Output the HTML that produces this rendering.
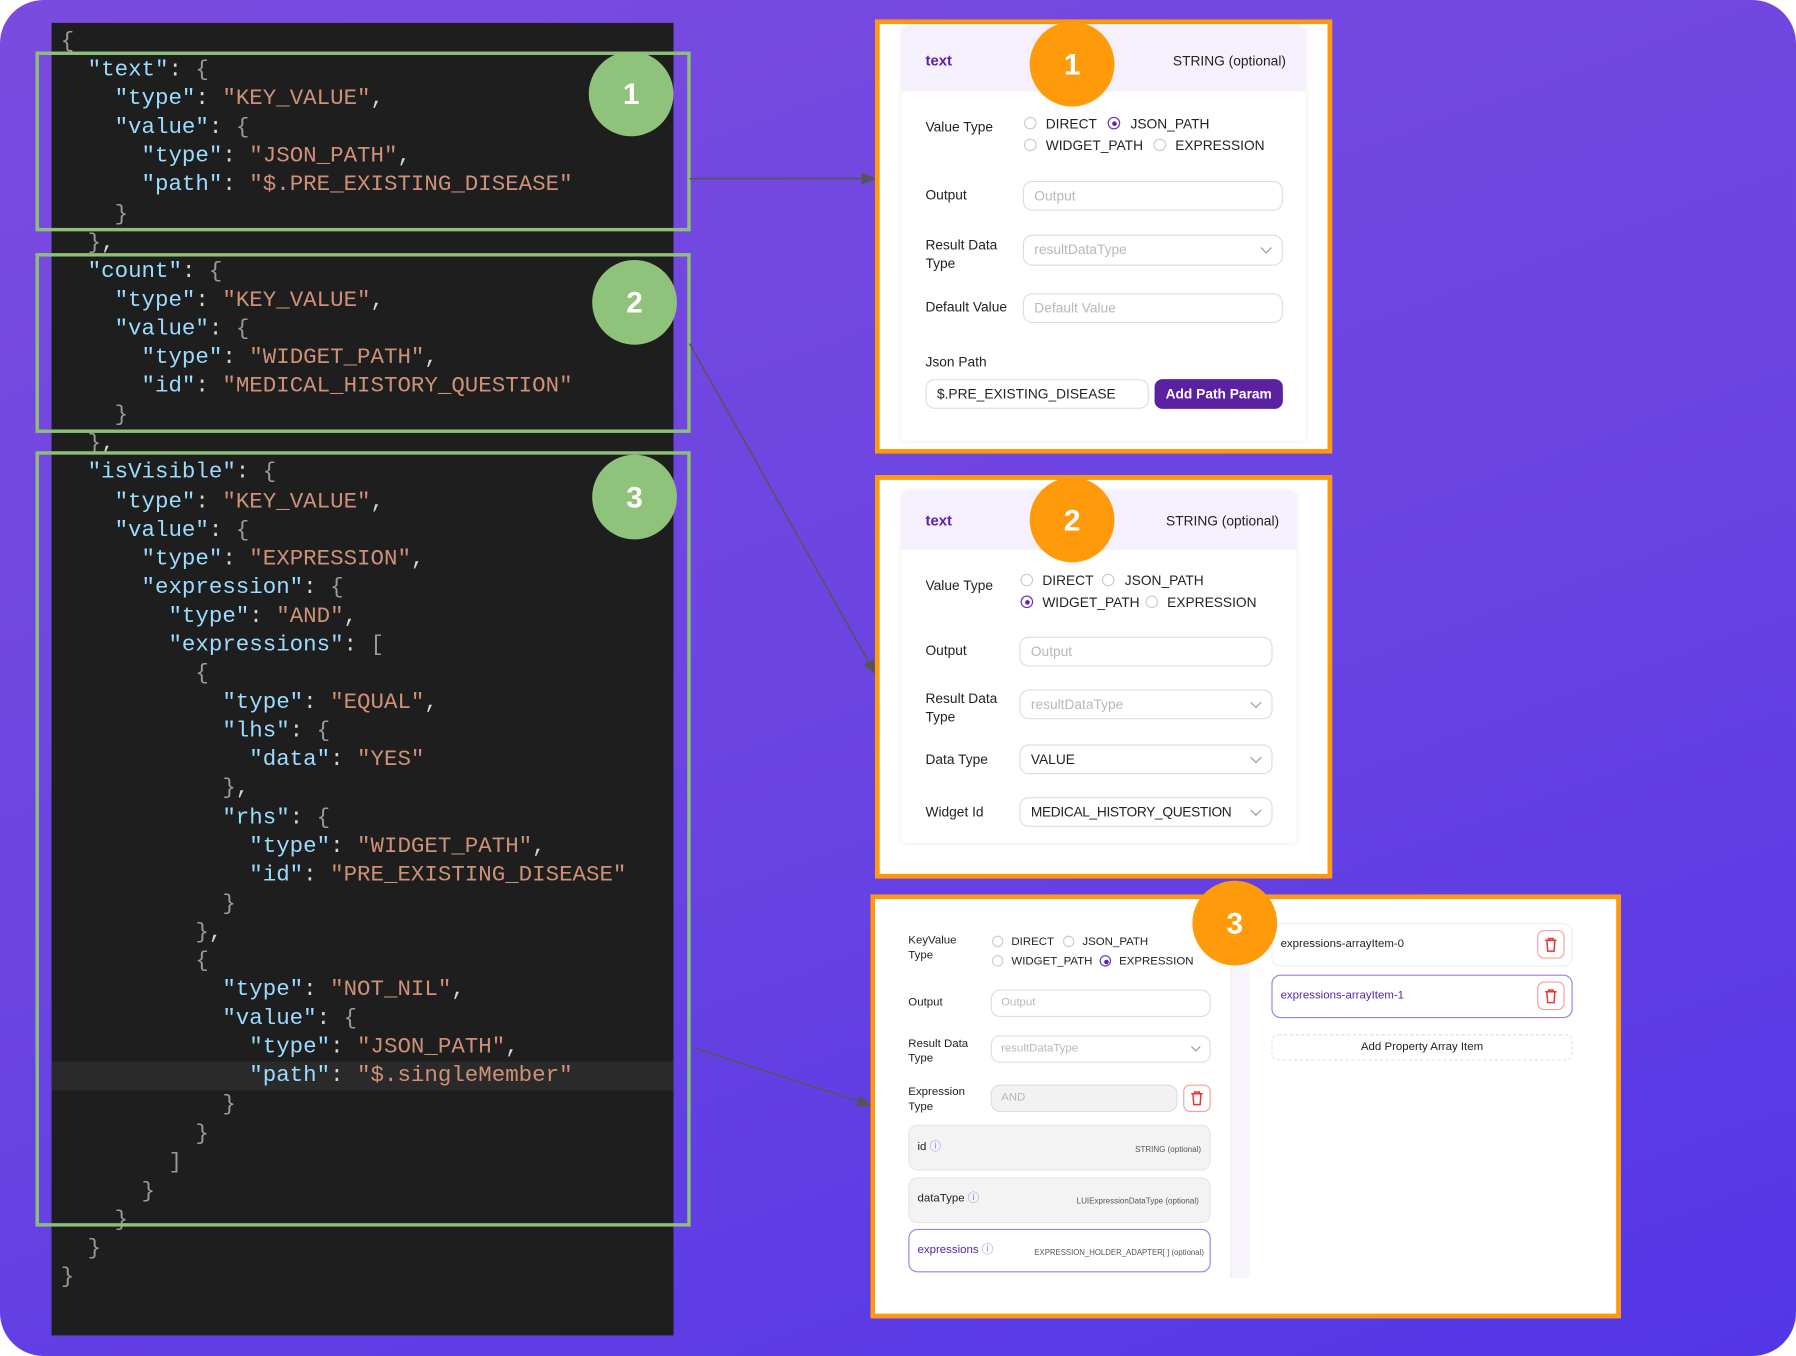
<!DOCTYPE html>
<html><head><meta charset="utf-8"><style>
html,body{margin:0;padding:0;background:#fff;width:1796px;height:1356px;overflow:hidden}
#w{position:absolute;left:0;top:0;width:1568px;height:1184px;transform:scale(1.145408,1.145270);transform-origin:0 0;font-family:"Liberation Sans",sans-serif}
.bg{position:absolute;left:0;top:0;width:1568px;height:1184px;border-radius:38px;background:linear-gradient(160deg,#7b4bdf 0%,#6b44e2 50%,#5336e6 100%)}
.a{position:absolute}
.code{position:absolute;left:45px;top:20px;width:543px;height:1146px;background:#1e1e1e;overflow:hidden}
.code pre{position:absolute;left:8px;top:4px;margin:0;font-family:"Liberation Mono",monospace;font-size:19.6px;line-height:25.1px;color:#d4d4d4}
.k{color:#9cdcfe}.s{color:#ce9178}.p{color:#9a9a9a}
.gbox{position:absolute;border:3px solid #8cc078;box-sizing:border-box}
.gc{position:absolute;width:74px;height:74px;border-radius:50%;background:#8fc27a;color:#fff;font-weight:bold;font-size:26px;text-align:center;line-height:74px}
.oc{position:absolute;width:74px;height:74px;border-radius:50%;background:#ff9a0a;color:#fff;font-weight:bold;font-size:26px;text-align:center;line-height:74px}
.obox{position:absolute;border:4px solid #ff980a;background:#fff;box-sizing:border-box}
.t{position:absolute;font-size:12px;color:#222;white-space:nowrap;line-height:14px}
.r{position:absolute;width:11px;height:11px;border:1px solid #ccc;border-radius:50%;box-sizing:border-box;background:#fff}
.r.on{border-color:#6a2cc0}
.r.on:after{content:"";position:absolute;left:2.5px;top:2.5px;width:4px;height:4px;border-radius:50%;background:#5b21a8}
.in{position:absolute;border:1px solid #ddd;border-radius:8px;box-sizing:border-box;background:#fff}
.ph{color:#b8b8b8}
.chev{position:absolute;width:6px;height:6px;border-right:1px solid #999;border-bottom:1px solid #999;transform:rotate(45deg)}
.trash{position:absolute;border:1px solid #f2a0a0;border-radius:6px;box-sizing:border-box;background:#fff}
.trash svg{position:absolute;left:50%;top:50%;margin:-7px 0 0 -6px}
</style></head><body><div id="w">
<div class="bg"></div>
<div class="code"><pre><span class="p">{</span>
  <span class="k">"text"</span>: <span class="p">{</span>
    <span class="k">"type"</span>: <span class="s">"KEY_VALUE"</span>,
    <span class="k">"value"</span>: <span class="p">{</span>
      <span class="k">"type"</span>: <span class="s">"JSON_PATH"</span>,
      <span class="k">"path"</span>: <span class="s">"$.PRE_EXISTING_DISEASE"</span>
    <span class="p">}</span>
  <span class="p">}</span>,
  <span class="k">"count"</span>: <span class="p">{</span>
    <span class="k">"type"</span>: <span class="s">"KEY_VALUE"</span>,
    <span class="k">"value"</span>: <span class="p">{</span>
      <span class="k">"type"</span>: <span class="s">"WIDGET_PATH"</span>,
      <span class="k">"id"</span>: <span class="s">"MEDICAL_HISTORY_QUESTION"</span>
    <span class="p">}</span>
  <span class="p">}</span>,
  <span class="k">"isVisible"</span>: <span class="p">{</span>
    <span class="k">"type"</span>: <span class="s">"KEY_VALUE"</span>,
    <span class="k">"value"</span>: <span class="p">{</span>
      <span class="k">"type"</span>: <span class="s">"EXPRESSION"</span>,
      <span class="k">"expression"</span>: <span class="p">{</span>
        <span class="k">"type"</span>: <span class="s">"AND"</span>,
        <span class="k">"expressions"</span>: <span class="p">[</span>
          <span class="p">{</span>
            <span class="k">"type"</span>: <span class="s">"EQUAL"</span>,
            <span class="k">"lhs"</span>: <span class="p">{</span>
              <span class="k">"data"</span>: <span class="s">"YES"</span>
            <span class="p">}</span>,
            <span class="k">"rhs"</span>: <span class="p">{</span>
              <span class="k">"type"</span>: <span class="s">"WIDGET_PATH"</span>,
              <span class="k">"id"</span>: <span class="s">"PRE_EXISTING_DISEASE"</span>
            <span class="p">}</span>
          <span class="p">}</span>,
          <span class="p">{</span>
            <span class="k">"type"</span>: <span class="s">"NOT_NIL"</span>,
            <span class="k">"value"</span>: <span class="p">{</span>
              <span class="k">"type"</span>: <span class="s">"JSON_PATH"</span>,
<span style="background:#2a2a2a;display:inline-block;width:535px;margin-left:-8px;padding-left:8px;vertical-align:top">              <span class="k">"path"</span>: <span class="s">"$.singleMember"</span></span>
            <span class="p">}</span>
          <span class="p">}</span>
        <span class="p">]</span>
      <span class="p">}</span>
    <span class="p">}</span>
  <span class="p">}</span>
<span class="p">}</span></pre></div>

<div class="gbox" style="left:31px;top:45px;width:572px;height:157px"></div>
<div class="gbox" style="left:31px;top:221px;width:572px;height:157px"></div>
<div class="gbox" style="left:31px;top:394px;width:572px;height:677px"></div>
<div class="gc" style="left:514px;top:45px">1</div>
<div class="gc" style="left:517px;top:227px">2</div>
<div class="gc" style="left:517px;top:397px">3</div>

<svg class="a" style="left:0;top:0" width="1568" height="1184">
<defs><marker id="ah" markerWidth="10" markerHeight="8" refX="9" refY="4" orient="auto"><path d="M0,0 L10,4 L0,8 z" fill="#555"/></marker></defs>
<line x1="602" y1="156" x2="764" y2="156" stroke="#555" stroke-width="1.3" marker-end="url(#ah)"/>
<line x1="602" y1="300" x2="764" y2="588" stroke="#555" stroke-width="1.3" marker-end="url(#ah)"/>
<line x1="606" y1="915" x2="760" y2="965" stroke="#555" stroke-width="1.3" marker-end="url(#ah)"/>
</svg>

<!-- Box 1 -->
<div class="obox" style="left:764px;top:17px;width:399px;height:379px"></div>
<div class="a" style="left:787px;top:22px;width:353px;height:363px;background:#fff;box-shadow:0 0 4px rgba(0,0,0,.08);border-radius:8px 8px 0 0"></div>
<div class="a" style="left:787px;top:22px;width:353px;height:58px;background:#f6f0fd;border-radius:8px 8px 0 0"></div>
<div class="t" style="left:808px;top:46px;font-weight:bold;color:#5b21a8;font-size:13px">text</div>
<div class="t" style="left:1024px;top:46px">STRING (optional)</div>
<div class="t" style="left:808px;top:104px">Value Type</div>
<div class="r" style="left:894px;top:102px"></div><div class="t" style="left:913px;top:101px">DIRECT</div>
<div class="r on" style="left:967px;top:102px"></div><div class="t" style="left:987px;top:101px">JSON_PATH</div>
<div class="r" style="left:894px;top:121px"></div><div class="t" style="left:913px;top:120px">WIDGET_PATH</div>
<div class="r" style="left:1007px;top:121px"></div><div class="t" style="left:1026px;top:120px">EXPRESSION</div>
<div class="t" style="left:808px;top:163px">Output</div>
<div class="in" style="left:893px;top:158px;width:227px;height:26px"></div><div class="t ph" style="left:903px;top:164px">Output</div>
<div class="t" style="left:808px;top:206px;line-height:16px">Result Data<br>Type</div>
<div class="in" style="left:893px;top:205px;width:227px;height:27px"></div><div class="t ph" style="left:903px;top:211px">resultDataType</div><div class="chev" style="left:1102px;top:213px"></div>
<div class="t" style="left:808px;top:261px">Default Value</div>
<div class="in" style="left:893px;top:256px;width:227px;height:26px"></div><div class="t ph" style="left:903px;top:262px">Default Value</div>
<div class="t" style="left:808px;top:309px">Json Path</div>
<div class="in" style="left:808px;top:331px;width:195px;height:26px"></div><div class="t" style="left:818px;top:337px">$.PRE_EXISTING_DISEASE</div>
<div class="a" style="left:1008px;top:331px;width:112px;height:26px;background:#5b21a0;border-radius:7px;color:#fff;font-size:12px;font-weight:bold;text-align:center;line-height:26px">Add Path Param</div>
<div class="oc" style="left:899px;top:19px">1</div>

<!-- Box 2 -->
<div class="obox" style="left:764px;top:415px;width:399px;height:352px"></div>
<div class="a" style="left:787px;top:428px;width:345px;height:308px;background:#fff;box-shadow:0 0 4px rgba(0,0,0,.08);border-radius:8px 8px 0 0"></div>
<div class="a" style="left:787px;top:428px;width:345px;height:52px;background:#f6f0fd;border-radius:8px 8px 0 0"></div>
<div class="t" style="left:808px;top:448px;font-weight:bold;color:#5b21a8;font-size:13px">text</div>
<div class="t" style="left:1018px;top:448px">STRING (optional)</div>
<div class="t" style="left:808px;top:504px">Value Type</div>
<div class="r" style="left:891px;top:501px"></div><div class="t" style="left:910px;top:500px">DIRECT</div>
<div class="r" style="left:962px;top:501px"></div><div class="t" style="left:982px;top:500px">JSON_PATH</div>
<div class="r on" style="left:891px;top:520px"></div><div class="t" style="left:910px;top:519px">WIDGET_PATH</div>
<div class="r" style="left:1000px;top:520px"></div><div class="t" style="left:1019px;top:519px">EXPRESSION</div>
<div class="t" style="left:808px;top:561px">Output</div>
<div class="in" style="left:890px;top:556px;width:221px;height:26px"></div><div class="t ph" style="left:900px;top:562px">Output</div>
<div class="t" style="left:808px;top:602px;line-height:16px">Result Data<br>Type</div>
<div class="in" style="left:890px;top:602px;width:221px;height:26px"></div><div class="t ph" style="left:900px;top:608px">resultDataType</div><div class="chev" style="left:1093px;top:610px"></div>
<div class="t" style="left:808px;top:656px">Data Type</div>
<div class="in" style="left:890px;top:650px;width:221px;height:26px"></div><div class="t" style="left:900px;top:656px">VALUE</div><div class="chev" style="left:1093px;top:658px"></div>
<div class="t" style="left:808px;top:702px">Widget Id</div>
<div class="in" style="left:890px;top:696px;width:221px;height:26px"></div><div class="t" style="left:900px;top:702px;letter-spacing:-0.3px">MEDICAL_HISTORY_QUESTION</div><div class="chev" style="left:1093px;top:704px"></div>
<div class="oc" style="left:899px;top:417px">2</div>

<!-- Box 3 -->
<div class="obox" style="left:760px;top:781px;width:655px;height:370px"></div>
<div class="a" style="left:1074px;top:830px;width:16px;height:286px;background:#f7f5fb;border-left:1px solid #eee"></div>
<div class="t" style="left:793px;top:815px;font-size:10px;line-height:13px">KeyValue<br>Type</div>
<div class="r" style="left:866px;top:817px;width:10px;height:10px"></div><div class="t" style="left:883px;top:816px;font-size:10px">DIRECT</div>
<div class="r" style="left:928px;top:817px;width:10px;height:10px"></div><div class="t" style="left:945px;top:816px;font-size:10px">JSON_PATH</div>
<div class="r" style="left:866px;top:834px;width:10px;height:10px"></div><div class="t" style="left:883px;top:833px;font-size:10px">WIDGET_PATH</div>
<div class="r on" style="left:960px;top:834px;width:10px;height:10px"></div><div class="t" style="left:977px;top:833px;font-size:10px">EXPRESSION</div>
<div class="t" style="left:793px;top:869px;font-size:10px">Output</div>
<div class="in" style="left:865px;top:864px;width:192px;height:24px"></div><div class="t ph" style="left:874px;top:869px;font-size:10px">Output</div>
<div class="t" style="left:793px;top:905px;font-size:10px;line-height:13px">Result Data<br>Type</div>
<div class="in" style="left:865px;top:904px;width:192px;height:24px"></div><div class="t ph" style="left:874px;top:909px;font-size:10px">resultDataType</div><div class="chev" style="left:1041px;top:911px;width:5px;height:5px"></div>
<div class="t" style="left:793px;top:947px;font-size:10px;line-height:13px">Expression<br>Type</div>
<div class="in" style="left:865px;top:947px;width:163px;height:24px;background:#f2f2f2"></div><div class="t ph" style="left:874px;top:952px;font-size:10px">AND</div>
<div class="trash" style="left:1033px;top:947px;width:24px;height:24px"><svg width="12" height="14" viewBox="0 0 12 14" fill="none" stroke="#e33" stroke-width="1.3"><path d="M1 3h10M4 3V1.5h4V3M2.5 3l.7 9.5h5.6L9.5 3"/></svg></div>
<div class="a" style="left:793px;top:982px;width:264px;height:40px;background:#f3f3f3;border:1px solid #e6e6e6;border-radius:8px;box-sizing:border-box"></div>
<div class="t" style="left:801px;top:995px;font-size:10px">id <span style="color:#9a6fe0">ⓘ</span></div>
<div class="t" style="left:991px;top:998px;font-size:7px;color:#555">STRING (optional)</div>
<div class="a" style="left:793px;top:1028px;width:264px;height:40px;background:#f3f3f3;border:1px solid #e6e6e6;border-radius:8px;box-sizing:border-box"></div>
<div class="t" style="left:801px;top:1040px;font-size:10px">dataType <span style="color:#9a6fe0">ⓘ</span></div>
<div class="t" style="left:940px;top:1043px;font-size:7px;color:#555">LUIExpressionDataType (optional)</div>
<div class="a" style="left:793px;top:1073px;width:264px;height:38px;background:#fff;border:1px solid #a27de0;border-radius:8px;box-sizing:border-box"></div>
<div class="t" style="left:801px;top:1085px;font-size:10px;color:#5b21a8">expressions <span style="color:#9a6fe0">ⓘ</span></div>
<div class="t" style="left:903px;top:1088px;font-size:6.8px;color:#555">EXPRESSION_HOLDER_ADAPTER[ ] (optional)</div>
<div class="a" style="left:1110px;top:806px;width:263px;height:38px;border:1px solid #eee;border-radius:8px;box-sizing:border-box;background:#fff"></div>
<div class="t" style="left:1118px;top:818px;font-size:10px">expressions-arrayItem-0</div>
<div class="trash" style="left:1342px;top:812px;width:24px;height:25px"><svg width="12" height="14" viewBox="0 0 12 14" fill="none" stroke="#e33" stroke-width="1.3"><path d="M1 3h10M4 3V1.5h4V3M2.5 3l.7 9.5h5.6L9.5 3"/></svg></div>
<div class="a" style="left:1110px;top:851px;width:263px;height:38px;border:1px solid #a27de0;border-radius:8px;box-sizing:border-box;background:#fff"></div>
<div class="t" style="left:1118px;top:863px;font-size:10px;color:#5b21a8">expressions-arrayItem-1</div>
<div class="trash" style="left:1342px;top:857px;width:24px;height:25px"><svg width="12" height="14" viewBox="0 0 12 14" fill="none" stroke="#e33" stroke-width="1.3"><path d="M1 3h10M4 3V1.5h4V3M2.5 3l.7 9.5h5.6L9.5 3"/></svg></div>
<div class="a" style="left:1110px;top:903px;width:263px;height:23px;border:1px dashed #e2e2e2;border-radius:6px;box-sizing:border-box;text-align:center;font-size:10px;line-height:22px;color:#222">Add Property Array Item</div>
<div class="oc" style="left:1041px;top:769px">3</div>
</div></body></html>
